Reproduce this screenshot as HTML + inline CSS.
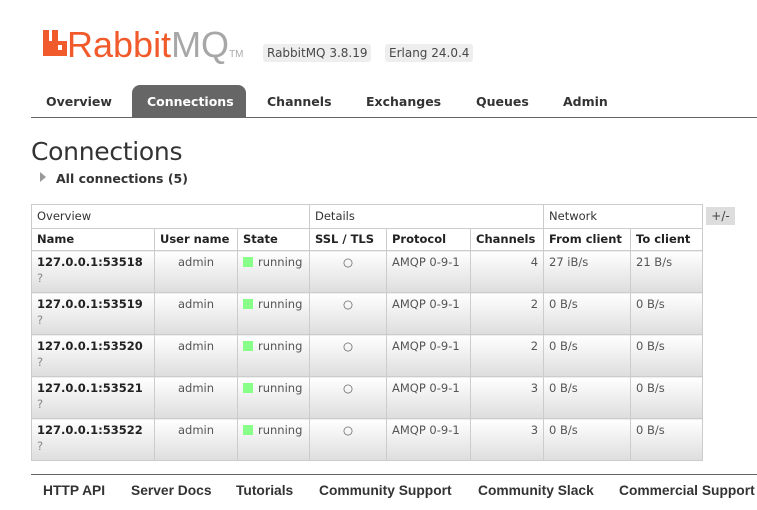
<!DOCTYPE html>
<html><head><meta charset="utf-8"><style>
*{margin:0;padding:0;box-sizing:border-box}
body{width:757px;height:510px;background:#fff;font-family:"DejaVu Sans",Verdana,sans-serif;color:#484848;position:relative;overflow:hidden;font-size:12px}
.a{position:absolute;white-space:nowrap}
.badge{background:#eee;border-radius:3px;padding:2px 4px;font-size:12px;color:#484848;top:44px}
.tab{top:94px;font-weight:bold;font-size:12.5px;color:#333}
table{position:absolute;left:31px;top:204px;border-collapse:collapse;table-layout:fixed;width:671px}
td,th{border:1px solid #ccc;padding:0 5px;text-align:left;vertical-align:top;font-size:11.5px;white-space:nowrap;overflow:hidden}
th{font-weight:bold;color:#222;height:22px;line-height:21px}
tr.g th{font-weight:normal;height:24px;line-height:22px;color:#333}
tr.d td{height:42px;background:linear-gradient(#fff,#ddd);line-height:20px;padding-top:1px;color:#555}
tr.d td.n{color:#222;font-weight:bold}
.q{font-weight:normal;color:#888;display:block;line-height:16px;margin-top:-2px}
.sq{display:inline-block;width:10px;height:10px;background:#8f8;margin-right:5px;vertical-align:-1px}
.f{top:483px;font-weight:bold;font-family:'Liberation Sans',sans-serif;font-size:13.8px;color:#333}
</style></head><body>
<svg class="a" style="left:43px;top:30px" width="24" height="26" viewBox="0 0 24 26"><path d="M0 0h6v11h3V0h6v11h9v15H0z M15 15v5h4v-5z" fill="#f15a2b" fill-rule="evenodd"/></svg>
<div class="a" style="left:67px;top:24px;font-family:'Liberation Sans',sans-serif;font-size:36px;color:#f15a2b">Rabbit<span style="color:#a7a7a7">MQ</span><span style="font-size:10px;color:#aaa">TM</span></div>
<div class="a badge" style="left:263px">RabbitMQ 3.8.19</div>
<div class="a badge" style="left:385px">Erlang 24.0.4</div>
<div class="a" style="left:132px;top:85px;width:114px;height:33px;background:#666;border-radius:8px 8px 0 0"></div>
<div class="a" style="left:31px;top:117px;width:726px;height:1px;background:#666"></div>
<div class="a tab" style="left:46px">Overview</div>
<div class="a tab" style="left:147px;color:#fff">Connections</div>
<div class="a tab" style="left:267px">Channels</div>
<div class="a tab" style="left:366px">Exchanges</div>
<div class="a tab" style="left:476px">Queues</div>
<div class="a tab" style="left:563px">Admin</div>
<div class="a" style="left:31px;top:137px;font-size:25px;color:#333;letter-spacing:-0.3px">Connections</div>
<div class="a" style="left:40px;top:172px;width:0;height:0;border-left:6px solid #999;border-top:5px solid transparent;border-bottom:5px solid transparent"></div>
<div class="a" style="left:56px;top:171px;font-weight:bold;font-size:12.5px;color:#333">All connections (5)</div>
<div class="a" style="left:706px;top:207px;width:29px;height:18px;background:#ddd;font-size:12px;text-align:center;line-height:18px;color:#444">+/-</div>
<table>
<colgroup><col style="width:123px"><col style="width:83px"><col style="width:72px"><col style="width:77px"><col style="width:84px"><col style="width:73px"><col style="width:87px"><col style="width:72px"></colgroup>
<tr class="g"><th colspan="3">Overview</th><th colspan="3">Details</th><th colspan="2">Network</th></tr>
<tr><th>Name</th><th>User name</th><th>State</th><th>SSL / TLS</th><th>Protocol</th><th>Channels</th><th>From client</th><th>To client</th></tr>
<tr class="d"><td class="n">127.0.0.1:53518<span class="q">?</span></td><td style="text-align:center">admin</td><td><span class="sq"></span>running</td><td style="text-align:center">○</td><td>AMQP 0-9-1</td><td style="text-align:right">4</td><td>27 iB/s</td><td>21 B/s</td></tr>
<tr class="d"><td class="n">127.0.0.1:53519<span class="q">?</span></td><td style="text-align:center">admin</td><td><span class="sq"></span>running</td><td style="text-align:center">○</td><td>AMQP 0-9-1</td><td style="text-align:right">2</td><td>0 B/s</td><td>0 B/s</td></tr>
<tr class="d"><td class="n">127.0.0.1:53520<span class="q">?</span></td><td style="text-align:center">admin</td><td><span class="sq"></span>running</td><td style="text-align:center">○</td><td>AMQP 0-9-1</td><td style="text-align:right">2</td><td>0 B/s</td><td>0 B/s</td></tr>
<tr class="d"><td class="n">127.0.0.1:53521<span class="q">?</span></td><td style="text-align:center">admin</td><td><span class="sq"></span>running</td><td style="text-align:center">○</td><td>AMQP 0-9-1</td><td style="text-align:right">3</td><td>0 B/s</td><td>0 B/s</td></tr>
<tr class="d"><td class="n">127.0.0.1:53522<span class="q">?</span></td><td style="text-align:center">admin</td><td><span class="sq"></span>running</td><td style="text-align:center">○</td><td>AMQP 0-9-1</td><td style="text-align:right">3</td><td>0 B/s</td><td>0 B/s</td></tr>
</table>
<div class="a" style="left:31px;top:474px;width:726px;height:1px;background:#666"></div>
<div class="a f" style="left:43px">HTTP API</div>
<div class="a f" style="left:131px">Server Docs</div>
<div class="a f" style="left:236px">Tutorials</div>
<div class="a f" style="left:319px">Community Support</div>
<div class="a f" style="left:478px">Community Slack</div>
<div class="a f" style="left:619px">Commercial Support</div>
</body></html>
